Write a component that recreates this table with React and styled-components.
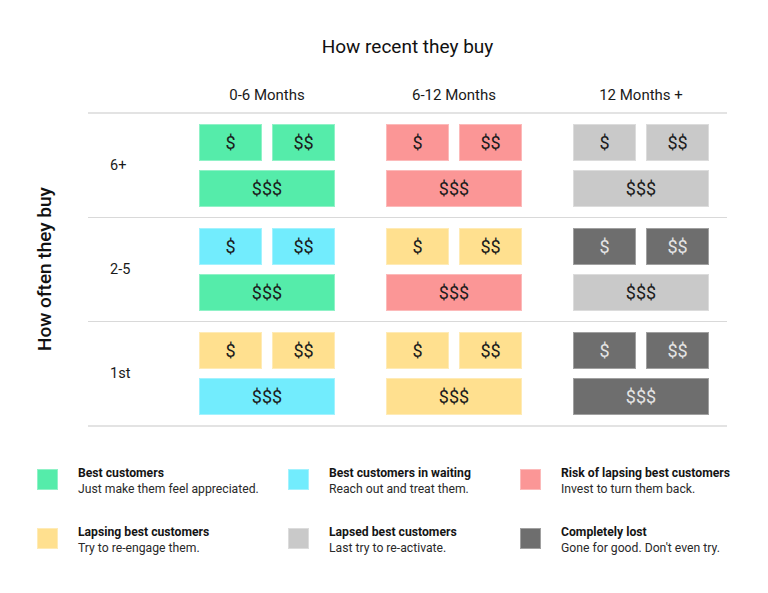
import React from "react";
import styled, { createGlobalStyle } from "styled-components";

const colors = {
    best: "#55ecaa",
    waiting: "#72ecfd",
    risk: "#fb9696",
    lapsing: "#ffe08f",
    lapsed: "#c9c9c9",
    lost: "#6e6e6e",
};

const GlobalStyle = createGlobalStyle`
  body {
    margin: 0;
    background: #ffffff;
    font-family: Roboto, "Liberation Sans", sans-serif;
    color: #1f1f1f;
  }
`;

const Page = styled.div`
  width: 768px;
  height: 593px;
  box-sizing: border-box;
  padding-top: 36px;
  overflow: hidden;
`;

const Chart = styled.div`
  display: grid;
  grid-template-columns: 88px 639px;
  grid-template-rows: auto auto 1fr;
`;

const Title = styled.div`
  grid-column: 2;
  text-align: center;
  font-size: 19px;
  line-height: 22px;
  font-weight: 400;
  color: #111;
`;

const SideLabel = styled.div`
  grid-column: 1;
  grid-row: 3;
  display: flex;
  align-items: center;
  justify-content: center;
  writing-mode: vertical-rl;
  transform: rotate(180deg);
  font-weight: 500;
  font-size: 19px;
  color: #111;
`;

const Row = styled.div`
  grid-column: 2;
  display: grid;
  grid-template-columns: 111px 187px 187px 1fr;
  align-items: center;
  border-top: ${(p) => p.$border || "none"};
  border-bottom: ${(p) => p.$bottom || "none"};
  padding: ${(p) => p.$pad};
`;

const HeaderCell = styled.div`
  width: 136px;
  text-align: center;
  font-size: 15px;
  line-height: 18px;
  color: #1a1a1a;
`;

const Body = styled.div`
  grid-column: 2;
  grid-row: 3;
  display: flex;
  flex-direction: column;
`;

const RowLabel = styled.div`
  padding-left: 22px;
  font-size: 14.5px;
  color: #1a1a1a;
`;

const Group = styled.div`
  width: 136px;
  display: grid;
  grid-template-columns: 63px 63px;
  column-gap: 10px;
  row-gap: 9px;
`;

const Box = styled.div`
  height: 37px;
  grid-column: ${(p) => (p.$wide ? "1 / span 2" : "auto")};
  background: ${(p) => p.$bg};
  box-shadow: inset 0 0 0 1px rgba(255, 255, 255, 0.35);
  display: flex;
  align-items: center;
  justify-content: center;
  font-size: 18px;
  color: ${(p) => (p.$dark ? "#e4e4e4" : "#1c1c1c")};
`;

const Legend = styled.div`
  margin-top: 38px;
  margin-left: 37px;
  display: grid;
  grid-template-columns: 251px 232px auto;
  row-gap: 27px;
`;

const LegendItem = styled.div`
  display: flex;
  align-items: flex-start;
`;

const Swatch = styled.div`
  width: 21px;
  height: 21px;
  margin-top: 4px;
  margin-right: 20px;
  background: ${(p) => p.$bg};
  box-shadow: inset 0 0 0 1px rgba(255, 255, 255, 0.35);
`;

const LegendText = styled.div`
  font-size: 12.2px;
  line-height: 16px;
  color: #2a2a2a;
  strong {
    display: block;
    font-weight: 700;
    color: #151515;
  }
`;

const columns = ["0-6 Months", "6-12 Months", "12 Months +"];

const rows = [
    {
        label: "6+",
        groups: [
            ["best", "best", "best"],
            ["risk", "risk", "risk"],
            ["lapsed", "lapsed", "lapsed"],
        ],
    },
    {
        label: "2-5",
        groups: [
            ["waiting", "waiting", "best"],
            ["lapsing", "lapsing", "risk"],
            ["lost", "lost", "lapsed"],
        ],
    },
    {
        label: "1st",
        groups: [
            ["lapsing", "lapsing", "waiting"],
            ["lapsing", "lapsing", "lapsing"],
            ["lost", "lost", "lost"],
        ],
    },
];

const legend = [
    ["best", "Best customers", "Just make them feel appreciated."],
    ["waiting", "Best customers in waiting", "Reach out and treat them."],
    ["risk", "Risk of lapsing best customers", "Invest to turn them back."],
    ["lapsing", "Lapsing best customers", "Try to re-engage them."],
    ["lapsed", "Lapsed best customers", "Last try to re-activate."],
    ["lost", "Completely lost", "Gone for good. Don't even try."],
];

const App = () => {
    return (
        <Page>
            <GlobalStyle />
            <Chart>
                <Title>How recent they buy</Title>
                <Row $pad="28px 0 8px 0">
                    <div />
                    {columns.map((c) => (
                        <HeaderCell key={c}>{c}</HeaderCell>
                    ))}
                </Row>
                <SideLabel>How often they buy</SideLabel>
                <Body>
                    {rows.map((r, i) => (
                        <Row
                            key={r.label}
                            $pad="10px 0"
                            $border={i === 0 ? "2px solid #e3e3e3" : "1px solid #d9d9d9"}
                            $bottom={i === rows.length - 1 ? "2px solid #e3e3e3" : "none"}
                        >
                            <RowLabel>{r.label}</RowLabel>
                            {r.groups.map((g, j) => (
                                <Group key={j}>
                                    {g.map((k, n) => (
                                        <Box
                                            key={n}
                                            $bg={colors[k]}
                                            $dark={k === "lost"}
                                            $wide={n === 2}
                                        >
                                            {"$".repeat(n + 1)}
                                        </Box>
                                    ))}
                                </Group>
                            ))}
                        </Row>
                    ))}
                </Body>
            </Chart>
            <Legend>
                {legend.map(([k, title, text]) => (
                    <LegendItem key={k}>
                        <Swatch $bg={colors[k]} />
                        <LegendText>
                            <strong>{title}</strong>
                            {text}
                        </LegendText>
                    </LegendItem>
                ))}
            </Legend>
        </Page>
    );
};

export default App;
